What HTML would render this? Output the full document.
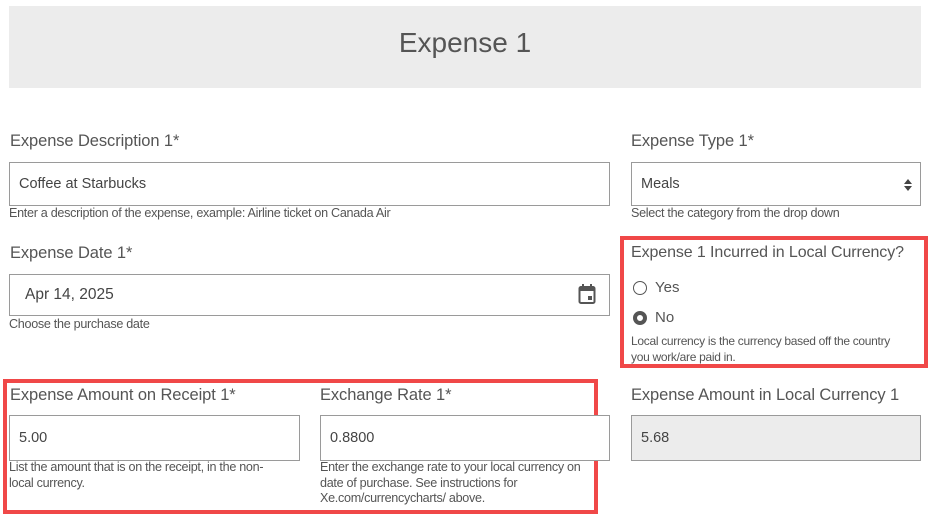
<!DOCTYPE html>
<html><head><meta charset="utf-8"><style>
*{box-sizing:border-box;margin:0;padding:0}
body{width:931px;height:518px;background:#fff;position:relative;font-family:"Liberation Sans",sans-serif;color:#555;overflow:hidden}
.a{position:absolute;white-space:nowrap}
.hdr{position:absolute;left:9px;top:6px;width:912px;height:82px;background:#ececec;text-align:center;line-height:74px;font-size:28px;color:#555}
.lbl{position:absolute;font-size:16.5px;color:#555;letter-spacing:-0.1px}
.inp{position:absolute;border:1px solid #9a9a9a;background:#fff;font-size:14.5px;color:#444;padding-left:9px;display:flex;align-items:center}
.help{position:absolute;font-size:12.6px;color:#555;line-height:15.5px;letter-spacing:-0.3px}
.red{position:absolute;border:4px solid #f04848}
.radio{position:absolute;width:14px;height:14px;border-radius:50%;border:1.5px solid #555;background:#fff}
</style></head><body>
<div class="hdr">Expense 1</div>

<div class="lbl a" style="left:10px;top:132px">Expense Description 1*</div>
<div class="inp" style="left:9px;top:162px;width:601px;height:44px">Coffee at Starbucks</div>
<div class="help a" style="left:9px;top:206px">Enter a description of the expense, example: Airline ticket on Canada Air</div>

<div class="lbl a" style="left:631px;top:132px">Expense Type 1*</div>
<div class="inp" style="left:631px;top:162px;width:290px;height:44px">Meals
<svg style="position:absolute;right:7px;top:15px" width="10" height="14" viewBox="0 0 10 14"><path d="M1 6 L5 1 L9 6Z M1 8 L5 13 L9 8Z" fill="#444"/></svg></div>
<div class="help a" style="left:631px;top:206px">Select the category from the drop down</div>

<div class="lbl a" style="left:10px;top:244px">Expense Date 1*</div>
<div class="inp" style="left:9px;top:274px;width:601px;height:42px;padding-left:15px;font-size:15.5px">Apr 14, 2025
<svg style="position:absolute;right:13px;top:9px" width="18" height="21" viewBox="0 0 18 21"><rect x="4" y="0" width="2" height="4" fill="#555"/><rect x="12" y="0" width="2" height="4" fill="#555"/><rect x="1.5" y="3" width="15" height="16" rx="1.5" fill="none" stroke="#555" stroke-width="2"/><rect x="1.5" y="3" width="15" height="4" fill="#555"/><rect x="10" y="12" width="4" height="4" fill="#555"/></svg></div>
<div class="help a" style="left:9px;top:317px">Choose the purchase date</div>

<div class="red" style="left:620px;top:236px;width:308px;height:132px"></div>
<div class="lbl a" style="left:631px;top:244px;font-size:16px">Expense 1 Incurred in Local Currency?</div>
<div class="radio" style="left:633px;top:281px"></div>
<div class="a" style="left:655px;top:279px;font-size:15px">Yes</div>
<div class="radio" style="left:633px;top:311px;border:4px solid #555"></div>
<div class="a" style="left:655px;top:309px;font-size:15px">No</div>
<div class="help a" style="left:631px;top:334px;font-size:12px">Local currency is the currency based off the country<br>you work/are paid in.</div>

<div class="red" style="left:3px;top:379px;width:595px;height:135px"></div>
<div class="lbl a" style="left:10px;top:386px">Expense Amount on Receipt 1*</div>
<div class="inp" style="left:9px;top:415px;width:291px;height:46px">5.00</div>
<div class="help a" style="left:9px;top:460px">List the amount that is on the receipt, in the non-<br>local currency.</div>

<div class="lbl a" style="left:320px;top:386px">Exchange Rate 1*</div>
<div class="inp" style="left:320px;top:415px;width:290px;height:46px">0.8800</div>
<div class="help a" style="left:320px;top:460px">Enter the exchange rate to your local currency on<br>date of purchase. See instructions for<br>Xe.com/currencycharts/ above.</div>

<div class="lbl a" style="left:631px;top:386px">Expense Amount in Local Currency 1</div>
<div class="inp" style="left:631px;top:415px;width:290px;height:46px;background:#ececec">5.68</div>
</body></html>
